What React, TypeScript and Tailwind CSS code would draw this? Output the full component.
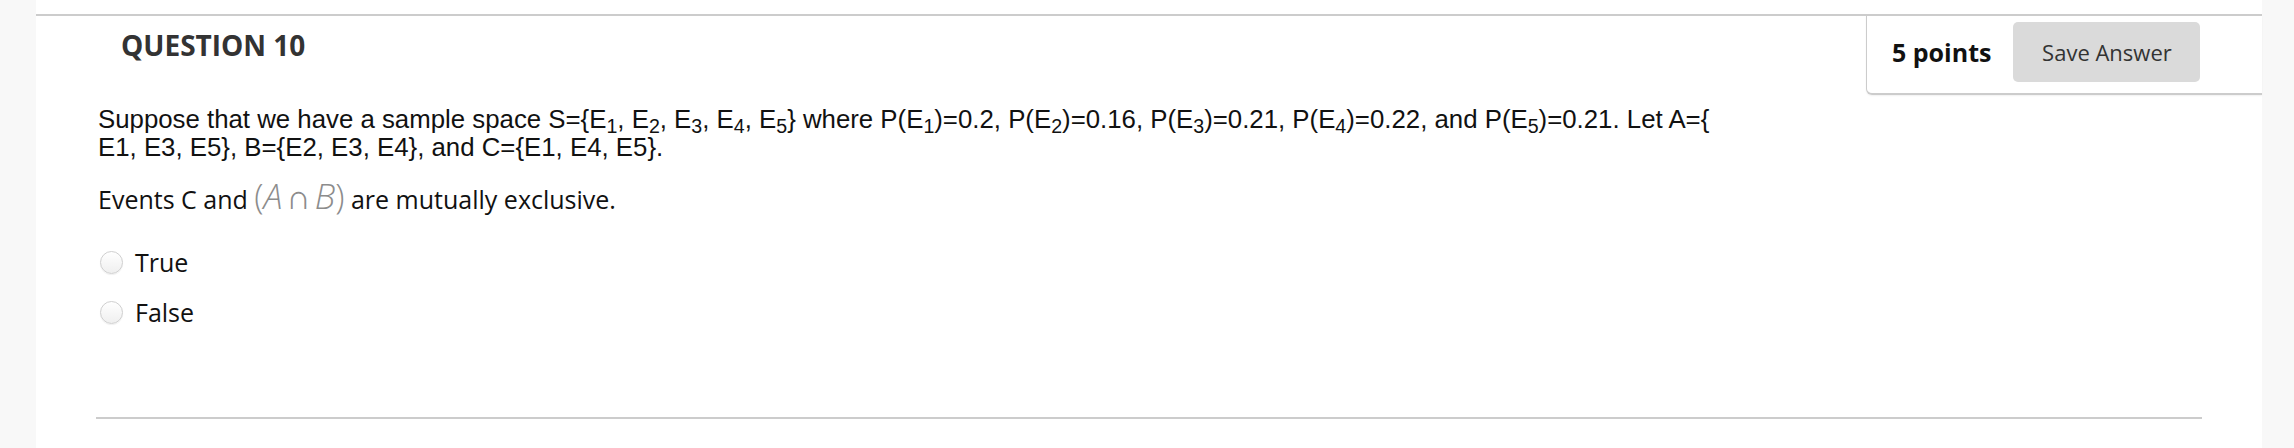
import React from "react";

const Radio = ({ label }: { label: string }) => (
  <label className="flex items-center h-[34px] gap-[12px]">
    <span className="w-[23px] h-[23px] rounded-full border border-[#cfcfcf] bg-linear-to-b from-white to-[#efefef] shadow-[0_1px_1px_rgba(0,0,0,0.06)]" />
    <span className="text-[25px] leading-[34px] text-[#111]">{label}</span>
  </label>
);

const Sub = ({ children }: any) => <sub className="text-[0.76em] leading-none">{children}</sub>;

export default function App() {
  return (
    <div className="flex min-h-[448px] bg-[#f8f8f8] pl-[36px] pr-[32px] font-['Open_Sans',sans-serif]">
      <div className="flex-1 bg-white pt-[14px]">
        <div className="border-t-2 border-[#cccccc]">
          <div className="flex justify-between">
            <h2 className="pl-[85px] pt-[10px] text-[28px] leading-[38px] font-bold text-[#333]">
              QUESTION 10
            </h2>
            <div className="flex h-[79px] w-[396px] items-start gap-[22px] rounded-bl-[6px] border-b-2 border-l border-[#cccccc] pl-[25px] pt-[6px] shadow-[0_1px_2px_rgba(0,0,0,0.06)]">
              <span className="h-[60px] text-[25px] leading-[60px] font-bold text-[#111]">5 points</span>
              <button className="h-[60px] w-[187px] rounded-[5px] bg-[#dadada] text-[22px] text-[#333]">
                Save Answer
              </button>
            </div>
          </div>

          <div className="pl-[62px] pt-[10px]">
            <p className="font-['Liberation_Sans',Arial,sans-serif] text-[25.8px] leading-[28px] text-[#111]">
              Suppose that we have a sample space S={"{"}E<Sub>1</Sub>, E<Sub>2</Sub>, E<Sub>3</Sub>, E<Sub>4</Sub>, E
              <Sub>5</Sub>{"}"} where P(E<Sub>1</Sub>)=0.2, P(E<Sub>2</Sub>)=0.16, P(E<Sub>3</Sub>)=0.21, P(E
              <Sub>4</Sub>)=0.22, and P(E<Sub>5</Sub>)=0.21. Let A={"{"}
              <br />
              E1, E3, E5{"}"}, B={"{"}E2, E3, E4{"}"}, and C={"{"}E1, E4, E5{"}"}.
            </p>
            <p className="mt-[20px] text-[25px] leading-[34px] text-[#111]">
              Events C and{" "}
              <span className="text-[#8c8c8c] text-[34px] leading-[30px]">
                <span className="font-light">(</span>
                <span className="italic font-light">A</span>
                <span className="mx-[4px]">∩</span>
                <span className="italic font-light">B</span>
                <span className="font-light">)</span>
              </span>{" "}
              are mutually exclusive.
            </p>
          </div>

          <div className="ml-[64px] mt-[29px] flex flex-col gap-[16px]">
            <Radio label="True" />
            <Radio label="False" />
          </div>

          <div className="mx-[60px] mt-[88px] border-t-2 border-[#cccccc]" />
        </div>
      </div>
    </div>
  );
}
